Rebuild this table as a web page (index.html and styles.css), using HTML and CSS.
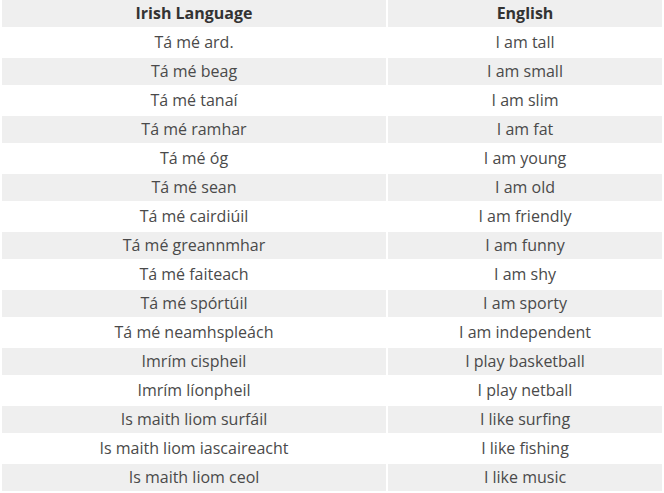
FILE: index.html
```html
<!DOCTYPE html>
<html>
<head>
<meta charset="utf-8">
<link rel="stylesheet" href="styles.css">
</head>
<body>
<table class="vocab">
<thead>
<tr><th class="col-irish">Irish Language</th><th class="col-english">English</th></tr>
</thead>
<tbody>
<tr><td>Tá mé ard.</td><td>I am tall</td></tr>
<tr><td>Tá mé beag</td><td>I am small</td></tr>
<tr><td>Tá mé tanaí</td><td>I am slim</td></tr>
<tr><td>Tá mé ramhar</td><td>I am fat</td></tr>
<tr><td>Tá mé óg</td><td>I am young</td></tr>
<tr><td>Tá mé sean</td><td>I am old</td></tr>
<tr><td>Tá mé cairdiúil</td><td>I am friendly</td></tr>
<tr><td>Tá mé greannmhar</td><td>I am funny</td></tr>
<tr><td>Tá mé faiteach</td><td>I am shy</td></tr>
<tr><td>Tá mé spórtúil</td><td>I am sporty</td></tr>
<tr><td>Tá mé neamhspleách</td><td>I am independent</td></tr>
<tr><td>Imrím cispheil</td><td>I play basketball</td></tr>
<tr><td>Imrím líonpheil</td><td>I play netball</td></tr>
<tr><td>Is maith liom surfáil</td><td>I like surfing</td></tr>
<tr><td>Is maith liom iascaireacht</td><td>I like fishing</td></tr>
<tr><td>Is maith liom ceol</td><td>I like music</td></tr>
</tbody>
</table>
</body>
</html>
```
FILE: styles.css
```css
html, body {
  margin: 0;
  padding: 0;
  background: #ffffff;
}
body {
  font-family: "Open Sans", "Liberation Sans", sans-serif;
  color: #4a4a4a;
  font-size: 16px;
}
.vocab {
  width: 664px;
  border-collapse: separate;
  border-spacing: 2px;
  margin-top: -2px;
}
.vocab th,
.vocab td {
  height: 27px;
  padding: 0;
  text-align: center;
  vertical-align: middle;
  line-height: 27px;
}
.vocab th {
  font-weight: 700;
  font-size: 16px;
  color: #333333;
  background: #efefef;
}
.col-irish {
  width: 384px;
}
.vocab tbody tr:nth-child(even) td {
  background: #efefef;
}
```
